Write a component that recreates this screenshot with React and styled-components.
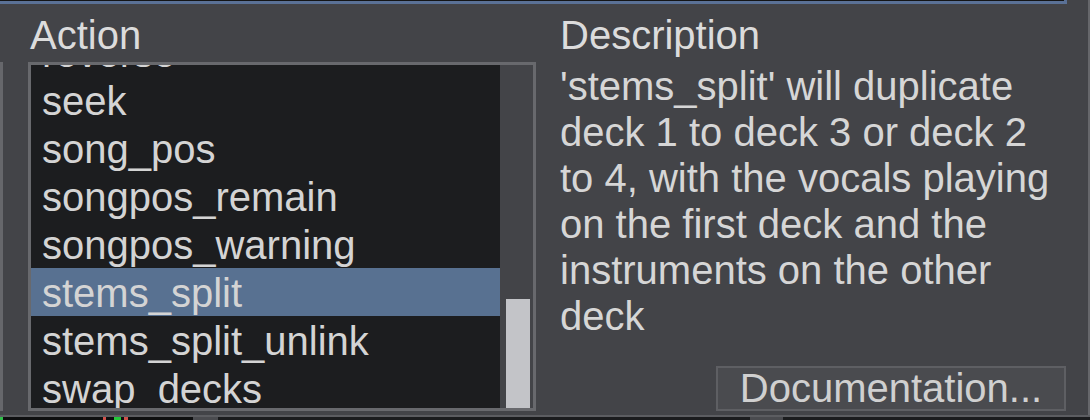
import React from "react";
import styled, { createGlobalStyle } from "styled-components";

const GlobalStyle = createGlobalStyle`
  html, body {
    margin: 0;
    padding: 0;
    background: #434448;
    overflow: hidden;
  }
  body {
    font-family: "Liberation Sans", Arial, sans-serif;
  }
`;

const Page = styled.div`
  width: 1090px;
  height: 420px;
  background: #434448;
  display: flex;
  flex-direction: column;
`;

const Frame = styled.div`
  height: 415px;
  border-right: 2px solid #66676b;
  box-sizing: border-box;
  display: flex;
  flex-direction: column;
`;

const TopBox = styled.div`
  width: 1067px;
  height: 4px;
  box-sizing: border-box;
  background: #141516;
  border-bottom: 3px solid #5a7196;
  border-right: 3px solid #5a7196;
`;

const Main = styled.div`
  flex: 1;
  display: flex;
  padding-bottom: 4px;
`;

const LeftStub = styled.div`
  width: 3px;
  height: 349px;
  margin-top: 58px;
  background: #66676b;
`;

const Column = styled.div`
  display: flex;
  flex-direction: column;
  margin-left: ${(p) => p.$gap}px;
  width: ${(p) => p.$width}px;
`;

const Heading = styled.div`
  font-size: 40px;
  line-height: 46px;
  color: #dcdcdc;
  padding: 8px 0 4px ${(p) => p.$indent || 0}px;
`;

const ListBox = styled.div`
  height: 349px;
  box-sizing: border-box;
  border: 3px solid #68696d;
  display: flex;
`;

const Viewport = styled.div`
  flex: 1;
  overflow: hidden;
  background: #1c1d1f;
`;

const Rows = styled.div`
  margin-top: -37px;
`;

const Row = styled.div`
  height: 48px;
  line-height: 50px;
  padding-left: 11px;
  font-size: 40px;
  color: #d4d4d4;
  white-space: nowrap;
  background: ${(p) => (p.$selected ? "#587191" : "transparent")};
`;

const Track = styled.div`
  width: 33px;
  box-sizing: border-box;
  padding: 0 3px 0 6px;
  display: flex;
  align-items: flex-end;
  background: #434448;
`;

const Thumb = styled.div`
  width: 24px;
  height: 109px;
  background: #c3c4c8;
`;

const DescText = styled.div`
  font-size: 40px;
  line-height: 46px;
  color: #d6d6d6;
  margin-top: 1px;
`;

const DocButton = styled.button`
  margin-top: auto;
  align-self: flex-end;
  width: 350px;
  height: 45px;
  box-sizing: border-box;
  padding: 0;
  border: 2px solid #5e5f63;
  background: #4a4b4f;
  color: #d0d0d0;
  font-family: "Liberation Sans", Arial, sans-serif;
  font-size: 40px;
  line-height: 41px;
  text-align: center;
`;

const BottomLine = styled.div`
  height: 2px;
  background: #5c5d61;
`;

const BottomStrip = styled.div`
  flex: 1;
  display: flex;
`;

const Segment = styled.div`
  width: ${(p) => (p.$width ? `${p.$width}px` : "auto")};
  flex: ${(p) => (p.$width ? "none" : 1)};
  background: ${(p) => p.$color};
  display: flex;
`;

const Tick = styled.span`
  width: ${(p) => p.$w}px;
  margin-left: ${(p) => p.$at}px;
  background: ${(p) => p.$color};
`;

const actions = [
  "reverse",
  "seek",
  "song_pos",
  "songpos_remain",
  "songpos_warning",
  "stems_split",
  "stems_split_unlink",
  "swap_decks",
];

export default function App() {
  return (
    <Page>
      <GlobalStyle />
      <Frame>
        <TopBox />
        <Main>
          <LeftStub />
          <Column $gap={25} $width={508}>
            <Heading $indent={2}>Action</Heading>
            <ListBox>
              <Viewport>
                <Rows>
                  {actions.map((a) => (
                    <Row key={a} $selected={a === "stems_split"}>
                      {a}
                    </Row>
                  ))}
                </Rows>
              </Viewport>
              <Track>
                <Thumb />
              </Track>
            </ListBox>
          </Column>
          <Column $gap={24} $width={506}>
            <Heading>Description</Heading>
            <DescText>
              'stems_split' will duplicate deck 1 to deck 3 or deck 2 to 4,
              with the vocals playing on the first deck and the instruments on
              the other deck
            </DescText>
            <DocButton>Documentation...</DocButton>
          </Column>
        </Main>
      </Frame>
      <BottomLine />
      <BottomStrip>
        <Segment $width={193} $color="#0e0f10">
          <Tick $at={0} $w={3} $color="#2fbf4a" />
          <Tick $at={100} $w={3} $color="#d0504a" />
          <Tick $at={8} $w={7} $color="#22c83a" />
          <Tick $at={3} $w={4} $color="#d0504a" />
        </Segment>
        <Segment $width={25} $color="#4a4b4f" />
        <Segment $width={532} $color="#1b1c1e" />
        <Segment $width={33} $color="#4a4b4f" />
        <Segment $color="#1b1c1e" />
      </BottomStrip>
    </Page>
  );
}
